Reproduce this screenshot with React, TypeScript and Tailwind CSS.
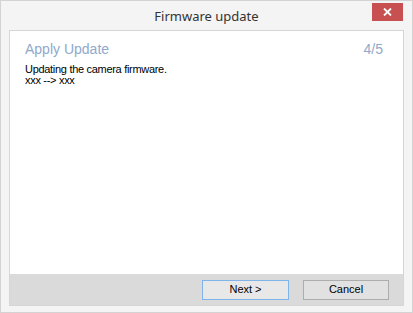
export default function App() {
  return (
    <div className="w-[413px] h-[313px] bg-white">
      <div className="w-[413px] h-[313px] flex flex-col border border-[#d3d3d3] bg-[#f4f4f4] font-['Liberation_Sans',sans-serif]">
        <div className="relative h-[28px] flex items-center justify-center">
          <span className="text-[13px] text-[#333] font-['Noto_Sans',sans-serif] mt-[3px]">Firmware update</span>
          <button className="absolute right-[9px] top-[2px] w-[31px] h-[18px] bg-[#c75050] flex items-center justify-center">
            <svg width="9" height="8" viewBox="0 0 9 8">
              <path d="M1 0.5 L8 7.5 M8 0.5 L1 7.5" stroke="white" strokeWidth="1.8" />
            </svg>
          </button>
        </div>
        <div className="flex-1 px-[8px] pb-[6px] pt-[1px] flex">
          <div className="flex-1 flex flex-col border border-[#d6d6d6] bg-white">
            <div className="flex-1 px-[15px] pt-[8px]">
              <div className="flex justify-between items-center text-[14px] text-[#8fa9cb]">
                <span>Apply Update</span>
                <span className="mr-[5px]">4/5</span>
              </div>
              <div className="mt-[4px] text-[11px] leading-[11px] text-black tracking-[-0.3px]">
                <div>Updating the camera firmware.</div>
                <div>xxx --&gt; xxx</div>
              </div>
            </div>
            <div className="h-[31px] bg-[#dadada] flex items-center justify-end gap-[14px] pr-[14px]">
              <button className="w-[87px] h-[20px] border border-[#7eb4ea] bg-[#e8e8e8] text-[11px] text-black">
                Next &gt;
              </button>
              <button className="w-[86px] h-[20px] border border-[#adadad] bg-[#e1e1e1] text-[11px] text-black">
                Cancel
              </button>
            </div>
          </div>
        </div>
      </div>
    </div>
  )
}
